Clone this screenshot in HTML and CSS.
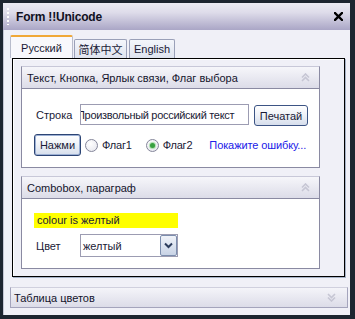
FILE: index.html
```html
<!DOCTYPE html>
<html>
<head>
<meta charset="utf-8">
<link rel="stylesheet" href="styles.css">
</head>
<body>
<div class="window">
  <div class="titlebar">
    <span class="grip"></span>
    <span class="title">Form !!Unicode</span>
    <svg class="close" width="9" height="9" viewBox="0 0 9 9"><path d="M1 1L8 8M8 1L1 8" stroke="#000" stroke-width="2.4" stroke-linecap="square"/></svg>
  </div>
  <div class="client">
    <div class="tabs">
      <div class="tab active">Русский</div>
      <div class="tab">简体中文</div>
      <div class="tab">English</div>
    </div>
    <div class="tabpanel">
      <div class="group g1">
        <div class="group-head">
          <span>Текст, Кнопка, Ярлык связи, Флаг выбора</span>
          <svg class="chev" width="9" height="9" viewBox="0 0 9 9"><path d="M1 4.5L4.5 1L8 4.5M1 8L4.5 4.5L8 8" fill="none" stroke="#c6c6d4" stroke-width="1.6"/></svg>
        </div>
        <div class="group-body">
          <div class="row r1">
            <span class="label">Строка</span>
            <div class="textbox"><span class="tb-text">Произвольный российский текст</span></div>
            <div class="btn btn-print">Печатай</div>
          </div>
          <div class="row r2">
            <div class="btn btn-press">Нажми</div>
            <span class="radio r-first"></span><span class="rlabel">Флаг1</span>
            <span class="radio checked"></span><span class="rlabel">Флаг2</span>
            <span class="link">Покажите ошибку...</span>
          </div>
        </div>
      </div>
      <div class="group g2">
        <div class="group-head">
          <span>Combobox, параграф</span>
          <svg class="chev" width="9" height="9" viewBox="0 0 9 9"><path d="M1 4.5L4.5 1L8 4.5M1 8L4.5 4.5L8 8" fill="none" stroke="#c6c6d4" stroke-width="1.6"/></svg>
        </div>
        <div class="group-body">
          <div class="para">colour is желтый</div>
          <div class="row r3">
            <span class="label">Цвет</span>
            <div class="select">
              <span class="sel-text">желтый</span>
              <span class="sel-btn"><svg width="9" height="7" viewBox="0 0 9 7"><path d="M1 1.5L4.5 5L8 1.5" fill="none" stroke="#2c3c5c" stroke-width="2"/></svg></span>
            </div>
          </div>
        </div>
      </div>
    </div>
    <div class="bottom-panel">
      <span>Таблица цветов</span>
      <svg class="chev" width="9" height="9" viewBox="0 0 9 9"><path d="M1 1L4.5 4.5L8 1M1 4.5L4.5 8L8 4.5" fill="none" stroke="#c6c6d4" stroke-width="1.6"/></svg>
    </div>
  </div>
</div>
</body>
</html>
```

FILE: styles.css
```css
* { box-sizing: border-box; }
html, body { margin: 0; padding: 0; }
body {
  width: 355px;
  height: 319px;
  background: #1d2530;
  font-family: "Liberation Sans", Arial, sans-serif;
  font-size: 11px;
  color: #1a1a36;
  overflow: hidden;
}
.window {
  width: 355px;
  height: 319px;
  border-style: solid;
  border-color: #1d2530;
  border-width: 3px 5px 4px 3px;
  display: flex;
  flex-direction: column;
  background: #f0f0f7;
}
.titlebar {
  flex: none;
  height: 27px;
  display: flex;
  align-items: center;
  background: linear-gradient(#ecebf3, #dedcea 35%, #aaa6c6);
}
.grip {
  width: 2px;
  height: 17px;
  margin-left: 4px;
  background: repeating-linear-gradient(#ffffff 0 2px, transparent 2px 4px);
}
.title {
  margin-left: 7px;
  font-weight: bold;
  font-size: 12px;
  color: #10101e;
  letter-spacing: -0.2px;
}
.close { margin-left: auto; margin-right: 7px; }
.client {
  flex: 1;
  display: flex;
  flex-direction: column;
  padding: 5px 2px 7px 6px;
  border-left: 1px solid #c4c6d4;
}
.tabs {
  display: flex;
  align-items: flex-end;
  height: 23px;
}
.tab {
  height: 19px;
  padding: 0 3px;
  margin-right: 1px;
  display: flex;
  align-items: center;
  border: 1px solid #9aa0b8;
  border-bottom: none;
  border-radius: 2px 2px 0 0;
  background: linear-gradient(#f4f6fb, #dfe3ee);
  font-family: "Liberation Sans", "Noto Sans CJK SC", sans-serif;
}
.tab.active {
  height: 23px;
  width: 63px;
  justify-content: center;
  padding: 0;
  background: #f8f8fc;
  border-top: 2px solid #f0a838;
  border-color: #f0a838 #b8bccc #b8bccc #b8bccc;
}
.tab:nth-child(2) { width: 53px; justify-content: center; }
.tab:nth-child(3) { width: 46px; justify-content: center; margin-left: 1px; }
.tabpanel {
  width: 333px;
  height: 219px;
  margin-left: 2px;
  border: 1px solid #000;
  box-shadow: inset 1px 1px 0 #ffffff, 1px 1px 0 #a6b2c6;
  padding: 7px 24px 7px 8px;
  display: flex;
  flex-direction: column;
  gap: 8px;
  background: #f0f0f7;
}
.group {
  border: 1px solid #8a8aa2;
  border-top-color: #c8c8d8;
  background: #fff;
  display: flex;
  flex-direction: column;
}
.group-head {
  height: 22px;
  flex: none;
  display: flex;
  align-items: center;
  padding: 0 9px 0 5px;
  background: linear-gradient(#f6f6fa, #dcdce8);
  border-bottom: 1px solid #8a8aa2;
  color: #14142c;
}
.chev { margin-left: auto; }
.g1 { height: 102px; }
.g2 { height: 93px; }
.group-body {
  flex: 1;
  padding: 14px 0 0 12px;
}
.row { display: flex; align-items: center; }
.label { width: 46px; padding-left: 2px; }
.textbox {
  width: 169px;
  height: 21px;
  border: 1px solid #9c9cb2;
  overflow: hidden;
  white-space: nowrap;
  display: flex;
  align-items: center;
  background: #fff;
  letter-spacing: -0.3px;
}
.tb-text { margin-left: -4px; }
.btn {
  height: 21px;
  display: flex;
  align-items: center;
  justify-content: center;
  border: 1px solid #3c5484;
  border-radius: 3px;
  background: linear-gradient(#ffffff, #f0f3f8 45%, #d6deec);
}
.btn-print { width: 54px; margin-left: 5px; margin-top: 2px; }
.r2 { margin-top: 8px; }
.btn-press {
  width: 47px;
  height: 22px;
  box-shadow: inset 0 0 0 1px #9cb0d4;
  border-color: #2c4474;
}
.radio {
  width: 13px;
  height: 13px;
  border-radius: 50%;
  border: 1px solid #84869a;
  background: radial-gradient(circle at 40% 35%, #ffffff, #e4e4ec);
  display: flex;
  align-items: center;
  justify-content: center;
}
.r-first { margin-left: 4px; }
.radio.checked { margin-left: 14px; }
.radio.checked::after {
  content: "";
  width: 5px;
  height: 5px;
  border-radius: 50%;
  background: #38a040;
  box-shadow: 0 0 1px 1px #a8dca8;
}
.rlabel { margin-left: 4px; letter-spacing: -0.2px; }
.link { margin-left: 17px; color: #2020e8; letter-spacing: -0.1px; }
.para {
  width: 144px;
  height: 15px;
  background: #ffff00;
  line-height: 15px;
  padding-left: 3px;
}
.r3 { margin-top: 6px; }
.select {
  width: 98px;
  height: 23px;
  border: 1px solid #9c9cb2;
  display: flex;
  align-items: center;
  background: #fff;
}
.sel-text { flex: 1; padding-left: 2px; }
.sel-btn {
  width: 17px;
  height: 21px;
  border: 1px solid #7c8eae;
  border-radius: 2px;
  background: linear-gradient(#f0f3f9, #c8d3e6);
  display: flex;
  align-items: center;
  justify-content: center;
}
.bottom-panel {
  margin-top: 10px;
  height: 21px;
  display: flex;
  align-items: center;
  padding: 0 11px 0 3px;
  border: 1px solid #a4a4bc;
  border-top-color: #d0d0de;
  background: linear-gradient(#f4f4f9, #dcdce8);
  color: #14142c;
}
```
